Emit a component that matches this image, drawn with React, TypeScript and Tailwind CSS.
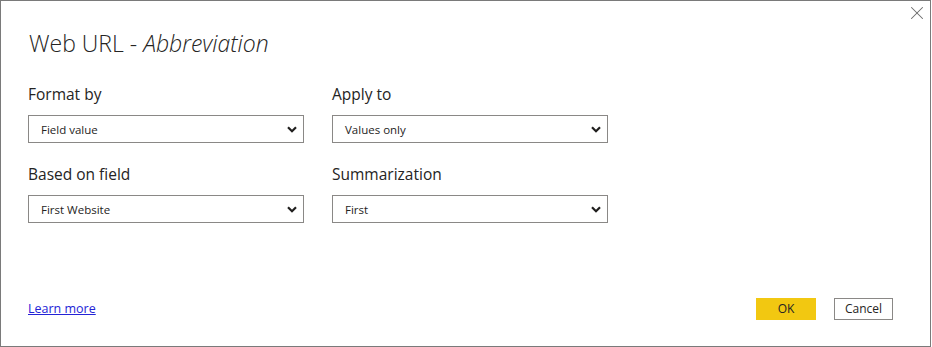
import { X } from "lucide-react";

type Campo = { label: string; valor: string };

const CAMPOS: Campo[] = [
  { label: "Format by", valor: "Field value" },
  { label: "Apply to", valor: "Values only" },
  { label: "Based on field", valor: "First Website" },
  { label: "Summarization", valor: "First" },
];

function Chevron() {
  return (
    <svg width="10" height="7" viewBox="0 0 10 7" className="shrink-0">
      <path d="M1 1.2 L5 5.2 L9 1.2" fill="none" stroke="#201f1e" strokeWidth="2.2" />
    </svg>
  );
}

function Desplegable({ label, valor }: Campo) {
  return (
    <div className="flex flex-col">
      <label className="text-[15.5px] leading-[22px] text-[#252423]">{label}</label>
      <div className="mt-[10px] flex h-[28px] w-[276px] items-center justify-between border border-[#8a8886] bg-white pl-[12px] pr-[6px]">
        <span className="pt-[1px] text-[11.5px] text-[#252423]">{valor}</span>
        <Chevron />
      </div>
    </div>
  );
}

export default function App() {
  return (
    <div className="font-['Segoe_UI','Open_Sans',sans-serif]">
      <div className="relative flex h-[347px] w-[931px] flex-col border border-[#7a7a7a] bg-white">
        <button className="absolute right-[2px] top-[1px] text-[#6b6b6b]">
          <X size={22} strokeWidth={1.1} />
        </button>
        <h1 className="pl-[28px] pt-[26px] text-[23px] font-light leading-[32px] text-[#252423]">
          Web URL - <i>Abbreviation</i>
        </h1>
        <div className="mt-[24px] grid w-fit grid-cols-2 gap-x-[28px] gap-y-[20px] pl-[27px]">
          {CAMPOS.map((c) => (
            <Desplegable key={c.label} label={c.label} valor={c.valor} />
          ))}
        </div>
        <div className="mt-auto flex items-center justify-between pb-[26px] pl-[27px] pr-[37px]">
          <a href="#" className="pt-[1px] text-[12.5px] text-[#2323d6] underline">
            Learn more
          </a>
          <div className="flex gap-[18px]">
            <button className="h-[22px] w-[60px] bg-[#f2c811] text-[12px] text-[#252423]">OK</button>
            <button className="h-[22px] w-[59px] border border-[#8a8886] bg-white text-[12px] text-[#252423]">
              Cancel
            </button>
          </div>
        </div>
      </div>
    </div>
  );
}
